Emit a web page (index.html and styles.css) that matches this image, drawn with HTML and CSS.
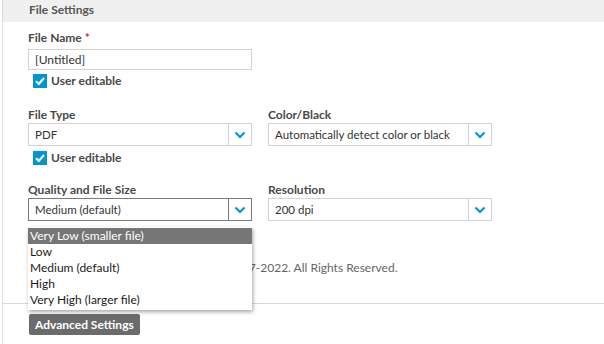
FILE: index.html
```html
<!DOCTYPE html>
<html lang="en">
<head>
    <meta charset="UTF-8">
    <title>File Settings</title>
    <link rel="stylesheet" href="styles.css">
</head>
<body>
    <div class="panel">
        <div class="panel-head">File Settings</div>

        <div class="panel-body">
            <div class="field">
                <label>File Name <span class="req">*</span></label>
                <div class="text-input">[Untitled]</div>
                <div class="check">
                    <span class="box"><svg width="12" height="12" viewBox="0 0 12 12"><path d="M2 6.2 L4.8 9 L10 3" fill="none" stroke="#fff" stroke-width="2.2"/></svg></span>
                    User editable
                </div>
            </div>

            <div class="row">
                <div class="field">
                    <label>File Type</label>
                    <div class="select">
                        <span class="value">PDF</span>
                        <span class="arrow"><svg width="12" height="8" viewBox="0 0 12 8"><path d="M1.5 1.5 L6 6 L10.5 1.5" fill="none" stroke="#0096d6" stroke-width="2.2"/></svg></span>
                    </div>
                    <div class="check">
                        <span class="box"><svg width="12" height="12" viewBox="0 0 12 12"><path d="M2 6.2 L4.8 9 L10 3" fill="none" stroke="#fff" stroke-width="2.2"/></svg></span>
                        User editable
                    </div>
                </div>
                <div class="field">
                    <label>Color/Black</label>
                    <div class="select">
                        <span class="value">Automatically detect color or black</span>
                        <span class="arrow"><svg width="12" height="8" viewBox="0 0 12 8"><path d="M1.5 1.5 L6 6 L10.5 1.5" fill="none" stroke="#0096d6" stroke-width="2.2"/></svg></span>
                    </div>
                </div>
            </div>

            <div class="row">
                <div class="field">
                    <label>Quality and File Size</label>
                    <div class="select focused">
                        <span class="value">Medium (default)</span>
                        <span class="arrow"><svg width="12" height="8" viewBox="0 0 12 8"><path d="M1.5 1.5 L6 6 L10.5 1.5" fill="none" stroke="#0096d6" stroke-width="2.2"/></svg></span>
                    </div>
                    <ul class="options">
                        <li class="active">Very Low (smaller file)</li>
                        <li>Low</li>
                        <li>Medium (default)</li>
                        <li>High</li>
                        <li>Very High (larger file)</li>
                    </ul>
                </div>
                <div class="field">
                    <label>Resolution</label>
                    <div class="select">
                        <span class="value">200 dpi</span>
                        <span class="arrow"><svg width="12" height="8" viewBox="0 0 12 8"><path d="M1.5 1.5 L6 6 L10.5 1.5" fill="none" stroke="#0096d6" stroke-width="2.2"/></svg></span>
                    </div>
                </div>
            </div>

            <p class="copyright">© Copyright 2017-2022. All Rights Reserved.</p>
        </div>

        <div class="panel-foot">
            <button>Advanced Settings</button>
        </div>
    </div>
</body>
</html>
```

FILE: styles.css
```css
body {
    margin: 0;
    font-family: Lato, "Liberation Sans", sans-serif;
    font-size: 12px;
    color: #333;
    background: #fff;
}
.panel {
    margin-left: 2px;
    border-left: 1px solid #dcdcdc;
    height: 344px;
}
.panel-head {
    height: 22px;
    line-height: 20px;
    padding-left: 26px;
    background: #f0f0f0;
    font-weight: bold;
    color: #555;
}
.panel-body {
    padding: 9px 0 0 25px;
}
.field {
    position: relative;
    width: 224px;
}
.field label {
    display: block;
    font-weight: bold;
    color: #4a4a4a;
    line-height: 14px;
    margin-bottom: 4px;
}
.row .field label {
    margin-bottom: 1px;
}
.req {
    color: #e0202e;
}
.row {
    display: flex;
    gap: 16px;
    margin-top: 20px;
}
.row + .row {
    margin-top: 18px;
}
.text-input,
.select {
    box-sizing: border-box;
    background: #fff;
    border: 1px solid #d4d4d4;
}
.text-input {
    height: 21px;
    padding: 0 6px;
    line-height: 19px;
}
.select {
    display: flex;
    height: 23px;
}
.select.focused {
    border-color: #7a7a7a;
}
.select .value {
    flex: 1;
    padding: 0 6px;
    line-height: 21px;
    font-size: 11.5px;
    white-space: nowrap;
    overflow: hidden;
}
.select .arrow {
    width: 22px;
    border-left: 1px solid #d4d4d4;
    display: flex;
    align-items: center;
    justify-content: center;
}
.select.focused .arrow {
    border-left-color: #7a7a7a;
}
.check {
    display: flex;
    align-items: center;
    gap: 4px;
    margin: 3px 0 0 5px;
    font-weight: bold;
    color: #4a4a4a;
    line-height: 15px;
}
.select + .check {
    margin-top: 4px;
}
.box {
    width: 14px;
    height: 14px;
    background: #0096d6;
    display: flex;
    align-items: center;
    justify-content: center;
}
.options {
    position: absolute;
    top: calc(100% + 6px);
    left: 0;
    width: 224px;
    margin: 0;
    padding: 1px 0 2px;
    list-style: none;
    background: #fff;
    box-shadow: 1px 2px 4px rgba(0, 0, 0, 0.35);
    z-index: 2;
}
.options li {
    padding: 0 2px;
    height: 16px;
    line-height: 16px;
    color: #1a1a1a;
}
.options li.active {
    background: #767676;
    color: #fff;
}
.copyright {
    margin: 40px 0 0 132px;
    color: #666;
    line-height: 14px;
}
.panel-foot {
    margin-top: 28px;
    border-top: 1px solid #d8d8d8;
    padding: 10px 0 0 26px;
}
button {
    font-family: inherit;
    font-size: 12px;
    font-weight: bold;
    color: #fff;
    background: #6b6b6b;
    border: none;
    border-radius: 2px;
    height: 21px;
    padding: 0 6px;
    white-space: nowrap;
}
```
